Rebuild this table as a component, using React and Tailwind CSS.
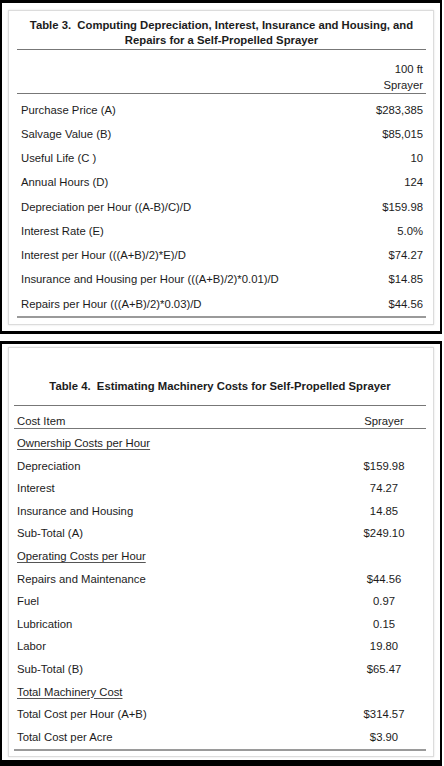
import React from "react";

const table3Rows = [
  ["Purchase Price (A)", "$283,385"],
  ["Salvage Value (B)", "$85,015"],
  ["Useful Life (C )", "10"],
  ["Annual Hours (D)", "124"],
  ["Depreciation per Hour ((A-B)/C)/D", "$159.98"],
  ["Interest Rate (E)", "5.0%"],
  ["Interest per Hour (((A+B)/2)*E)/D", "$74.27"],
  ["Insurance and Housing per Hour (((A+B)/2)*0.01)/D", "$14.85"],
  ["Repairs per Hour (((A+B)/2)*0.03)/D", "$44.56"],
];

// heading rows are underlined and have no value
const table4Rows = [
  ["Ownership Costs per Hour", null],
  ["Depreciation", "$159.98"],
  ["Interest", "74.27"],
  ["Insurance and Housing", "14.85"],
  ["Sub-Total (A)", "$249.10"],
  ["Operating Costs per Hour", null],
  ["Repairs and Maintenance", "$44.56"],
  ["Fuel", "0.97"],
  ["Lubrication", "0.15"],
  ["Labor", "19.80"],
  ["Sub-Total (B)", "$65.47"],
  ["Total Machinery Cost", null],
  ["Total Cost per Hour (A+B)", "$314.57"],
  ["Total Cost per Acre", "$3.90"],
];

function Frame({ children, className }) {
  return (
    <div className={"w-[442px] border-x-2 border-t-[3px] border-black px-[6px] " + className}>
      <div className="border border-[#dcdcdc] shadow-[0_0_2px_rgba(0,0,0,0.12)]">{children}</div>
    </div>
  );
}

export default function App() {
  return (
    <div
      className="w-[444px] h-[766px] bg-white text-[#1c1c1c] text-[11.3px] overflow-hidden"
      style={{ fontFamily: '"Liberation Sans", Arial, sans-serif' }}
    >
      <Frame className="pt-[7px] pb-[6px] border-b-[3px]">
        <div className="pl-[8px] pr-[7px] pt-[7px] pb-[6px]">
          <div className="border-b border-[#777] pb-[1px] text-center font-bold leading-[15px] whitespace-pre">
            {"Table 3.  Computing Depreciation, Interest, Insurance and Housing, and\nRepairs for a Self-Propelled Sprayer"}
          </div>
          <div className="border-b border-[#777] pt-[11px] pr-[3px] text-right leading-[16px]">
            <div>100 ft</div>
            <div>Sprayer</div>
          </div>
          <div className="pt-[4px] border-b-2 border-[#9a9a9a]">
            {table3Rows.map(([label, value]) => (
              <div key={label} className="flex h-[24.25px] items-center justify-between pl-[4px] pr-[3px]">
                <span>{label}</span>
                <span>{value}</span>
              </div>
            ))}
          </div>
        </div>
      </Frame>

      <Frame className="mt-[7px] pt-[3px] pb-[3px] border-b-[8px]">
        <div className="pl-[5px] pr-[7px] pt-[31px] pb-[5px]">
          <div className="border-b border-[#777] pb-[11px] text-center font-bold leading-[15px] whitespace-pre">
            {"Table 4.  Estimating Machinery Costs for Self-Propelled Sprayer"}
          </div>
          <div className="flex h-[23px] items-end justify-between border-b border-[#777] pl-[3px] leading-[14px]">
            <span>Cost Item</span>
            <span className="w-[84px] text-center">Sprayer</span>
          </div>
          <div className="pt-[3px] border-b-2 border-[#9a9a9a]">
            {table4Rows.map(([label, value]) => (
              <div key={label} className="flex h-[22.6px] items-center justify-between pl-[3px]">
                <span className={value === null ? "underline underline-offset-2 decoration-[#555]" : ""}>{label}</span>
                <span className="w-[84px] text-center">{value}</span>
              </div>
            ))}
          </div>
        </div>
      </Frame>
    </div>
  );
}
